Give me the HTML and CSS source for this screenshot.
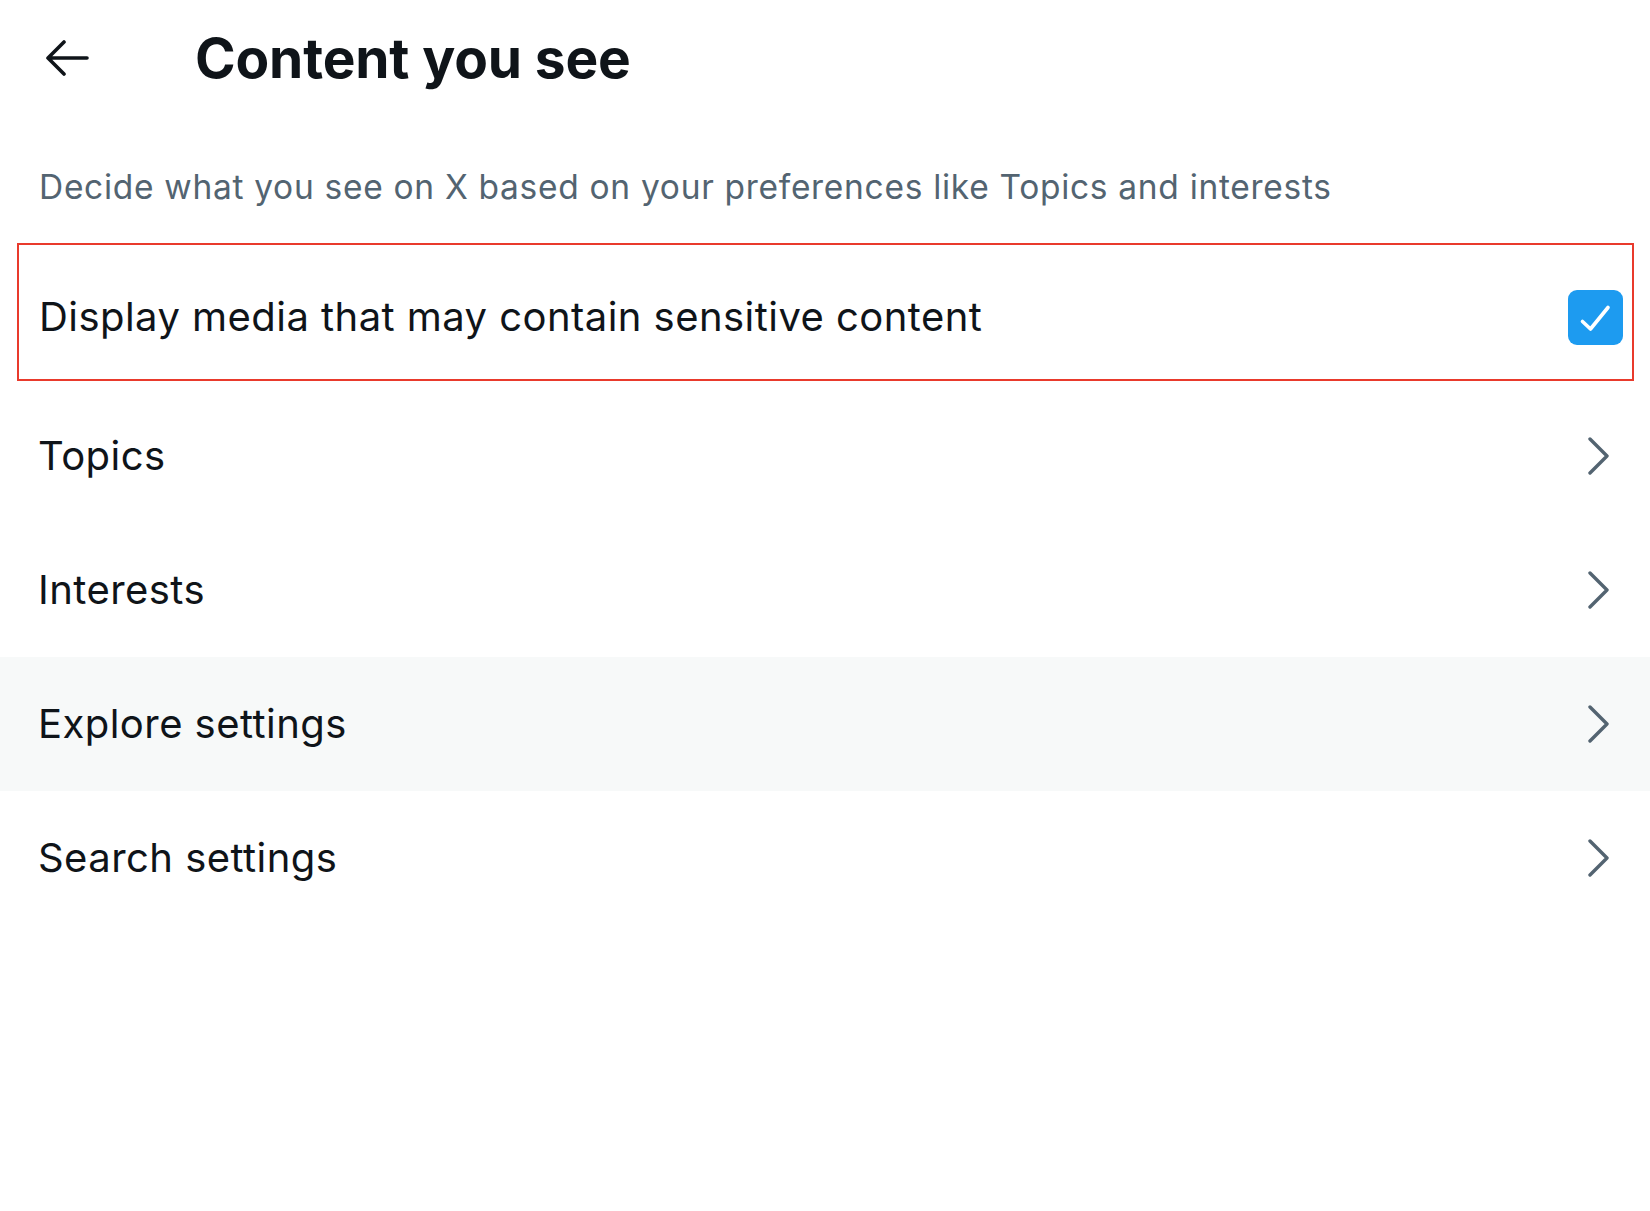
FILE: index.html
```html
<!DOCTYPE html>
<html lang="en">
<head>
<meta charset="utf-8">
<title>Content you see</title>
<link rel="stylesheet" href="styles.css">
</head>
<body>
<div class="page">
  <header class="header">
    <button class="back" aria-label="Back">
      <svg viewBox="0 0 44 36" width="44" height="36">
        <path d="M42 18 H4 M19 2 L3 18 L19 34" fill="none" stroke="#0f1419" stroke-width="3.6" stroke-linecap="round" stroke-linejoin="round"/>
      </svg>
    </button>
    <h1 class="title">Content you see</h1>
  </header>

  <p class="subtitle">Decide what you see on X based on your preferences like Topics and interests</p>

  <div class="highlight">
    <div class="row row-check">
      <span class="label">Display media that may contain sensitive content</span>
      <span class="checkbox">
        <svg viewBox="0 0 55 55" width="55" height="55">
          <path d="M14.5 31.5 L22.5 39 L40 17.5" fill="none" stroke="#ffffff" stroke-width="3.6" stroke-linecap="round" stroke-linejoin="round"/>
        </svg>
      </span>
    </div>
  </div>

  <ul class="list">
    <li class="row">
      <span class="label">Topics</span>
      <svg class="chev" viewBox="0 0 22 38" width="22" height="38"><path d="M2 2 L19 19 L2 36" fill="none" stroke="#536471" stroke-width="3.4" stroke-linecap="round" stroke-linejoin="round"/></svg>
    </li>
    <li class="row">
      <span class="label">Interests</span>
      <svg class="chev" viewBox="0 0 22 38" width="22" height="38"><path d="M2 2 L19 19 L2 36" fill="none" stroke="#536471" stroke-width="3.4" stroke-linecap="round" stroke-linejoin="round"/></svg>
    </li>
    <li class="row row-hover">
      <span class="label">Explore settings</span>
      <svg class="chev" viewBox="0 0 22 38" width="22" height="38"><path d="M2 2 L19 19 L2 36" fill="none" stroke="#536471" stroke-width="3.4" stroke-linecap="round" stroke-linejoin="round"/></svg>
    </li>
    <li class="row">
      <span class="label">Search settings</span>
      <svg class="chev" viewBox="0 0 22 38" width="22" height="38"><path d="M2 2 L19 19 L2 36" fill="none" stroke="#536471" stroke-width="3.4" stroke-linecap="round" stroke-linejoin="round"/></svg>
    </li>
  </ul>
</div>
</body>
</html>
```
FILE: styles.css
```css
* {
  box-sizing: border-box;
}

html, body {
  margin: 0;
  padding: 0;
  background: #ffffff;
}

body {
  font-family: Inter, "Liberation Sans", Arial, sans-serif;
  color: #0f1419;
}

.page {
  width: 1650px;
}

.header {
  display: flex;
  align-items: center;
  height: 116px;
  padding-left: 45px;
}

.back {
  display: flex;
  align-items: center;
  justify-content: center;
  width: 44px;
  height: 36px;
  padding: 0;
  margin: 0 106px 0 0;
  border: none;
  background: none;
}

.back svg {
  display: block;
}

.title {
  margin: 0;
  font-size: 55px;
  font-weight: 700;
  line-height: 1;
  letter-spacing: -0.15px;
}

.subtitle {
  margin: 51px 0 0 0;
  padding: 0 39px;
  font-size: 33.5px;
  line-height: 41px;
  letter-spacing: 0.7px;
  color: #536471;
}

.highlight {
  margin: 35px 16px 0 17px;
  height: 138px;
  border: 2px solid #e93a2c;
  padding-top: 10px;
}

.list {
  list-style: none;
  margin: 8px 0 0 0;
  padding: 0;
}

.row {
  display: flex;
  align-items: center;
  justify-content: space-between;
  height: 134px;
  padding: 0 40px 0 38px;
}

.row-check {
  height: 124px;
  padding: 0 9px 0 20px;
}

.row-hover {
  background: #f7f9f9;
}

.label {
  font-size: 40px;
  line-height: 48px;
  letter-spacing: 0.45px;
  color: #0f1419;
}

.checkbox {
  display: block;
  width: 55px;
  height: 55px;
  border-radius: 9px;
  background: #1d9bf0;
}

.checkbox svg {
  display: block;
}

.chev {
  display: block;
}
```
